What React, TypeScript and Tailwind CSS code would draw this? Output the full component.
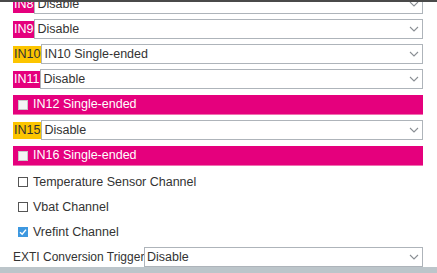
import React from 'react';

// Chevron used on the right side of every dropdown
const Chevron = () => (
  <svg width="10" height="6" viewBox="0 0 10 6" className="shrink-0">
    <path d="M1 1 L5 5 L9 1" fill="none" stroke="#8a8f94" strokeWidth="1.1" />
  </svg>
);

const SelectBox = ({ value }: { value: string }) => (
  <div className="flex-1 h-full flex items-center justify-between border border-[#aeb4ba] bg-white pl-[2px] pr-[3px]">
    <span className="text-[#333] whitespace-nowrap">{value}</span>
    <Chevron />
  </div>
);

type Tag = 'pink' | 'yellow';

const SelectRow = ({ label, tag, value }: { label: string; tag: Tag; value: string }) => (
  <div className="flex items-center h-[20px]">
    <span
      className={
        'h-[17px] flex items-center leading-none px-[1px] ' +
        (tag === 'pink' ? 'bg-[#e5007d] text-white' : 'bg-[#fcc500] text-[#333]')
      }
    >
      {label}
    </span>
    <SelectBox value={value} />
  </div>
);

const PinkBar = ({ text }: { text: string }) => (
  <div className="flex items-center h-[20px] mt-[1px] bg-[#e5007d] border-b border-[#f06fb0] pl-[5px] gap-[5px] text-white">
    <span className="w-[10px] h-[10px] bg-[#f4f4f4] border border-[#c8c8c8]" />
    <span>{text}</span>
  </div>
);

const CheckRow = ({ text, checked }: { text: string; checked?: boolean }) => (
  <div className="flex items-center h-[20px] pl-[5px] gap-[5px] text-[#333]">
    {checked ? (
      <span className="w-[10px] h-[10px] bg-[#3d98e0] flex items-center justify-center">
        <svg width="8" height="8" viewBox="0 0 8 8">
          <path d="M1 4.2 L3.2 6.3 L7 1.6" fill="none" stroke="white" strokeWidth="1.4" />
        </svg>
      </span>
    ) : (
      <span className="w-[10px] h-[10px] bg-white border border-[#555]" />
    )}
    <span>{text}</span>
  </div>
);

export default function App() {
  return (
    <div
      className="w-[437px] h-[273px] flex flex-col bg-white overflow-hidden text-[12.5px]"
      style={{ fontFamily: '"Liberation Sans", Arial, sans-serif' }}
    >
      <div className="h-[2px] bg-[#4a4a4a] shrink-0" />
      <div className="flex-1 overflow-hidden">
        <div className="flex flex-col gap-[5px] pl-[13px] w-[423px] -mt-[8px]">
          <SelectRow label="IN8" tag="pink" value="Disable" />
          <SelectRow label="IN9" tag="pink" value="Disable" />
          <SelectRow label="IN10" tag="yellow" value="IN10 Single-ended" />
          <SelectRow label="IN11" tag="pink" value="Disable" />
          <PinkBar text="IN12 Single-ended" />
          <SelectRow label="IN15" tag="yellow" value="Disable" />
          <PinkBar text="IN16 Single-ended" />
          <div className="flex flex-col gap-[5px] mt-[1px]">
            <CheckRow text="Temperature Sensor Channel" />
            <CheckRow text="Vbat Channel" />
            <CheckRow text="Vrefint Channel" checked />
          </div>
          <div className="flex items-center h-[20px]">
            <span className="text-[#333] text-[12px] whitespace-nowrap shrink-0 w-[131px]">EXTI Conversion Trigger</span>
            <SelectBox value="Disable" />
          </div>
        </div>
      </div>
      <div className="h-[6px] bg-[#bcc5ca] shrink-0" />
    </div>
  );
}
